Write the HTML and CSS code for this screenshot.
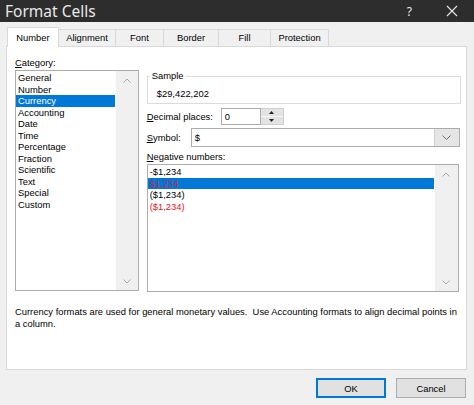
FILE: index.html
```html
<!DOCTYPE html>
<html lang="en">
<head>
    <meta charset="UTF-8">
    <title>Format Cells</title>
    <link rel="stylesheet" href="styles.css">
</head>
<body>
    <div class="titlebar">
        <span class="title">Format Cells</span>
        <span class="help">?</span>
        <svg class="close" width="12" height="12" viewBox="0 0 12 12">
            <path d="M1 1L11 11M11 1L1 11" stroke="#e8e8e8" stroke-width="1.1" fill="none"/>
        </svg>
    </div>

    <div class="tabs">
        <div class="tab active">Number</div>
        <div class="tab">Alignment</div>
        <div class="tab">Font</div>
        <div class="tab">Border</div>
        <div class="tab">Fill</div>
        <div class="tab">Protection</div>
    </div>

    <div class="panel">
        <div class="columns">
            <div class="category">
                <div class="label"><u>C</u>ategory:</div>
                <div class="listbox category-list">
                    <ul class="items">
                        <li>General</li>
                        <li>Number</li>
                        <li class="selected">Currency</li>
                        <li>Accounting</li>
                        <li>Date</li>
                        <li>Time</li>
                        <li>Percentage</li>
                        <li>Fraction</li>
                        <li>Scientific</li>
                        <li>Text</li>
                        <li>Special</li>
                        <li>Custom</li>
                    </ul>
                    <div class="scrollbar">
                        <svg width="8" height="5" viewBox="0 0 8 5"><path d="M0.5 4.5L4 1L7.5 4.5" stroke="#a8a8a8" fill="none"/></svg>
                        <svg width="8" height="5" viewBox="0 0 8 5"><path d="M0.5 0.5L4 4L7.5 0.5" stroke="#a8a8a8" fill="none"/></svg>
                    </div>
                </div>
            </div>

            <div class="options">
                <fieldset class="sample">
                    <legend>Sample</legend>
                    <div class="sample-value">$29,422,202</div>
                </fieldset>

                <div class="row decimals">
                    <span class="row-label"><u>D</u>ecimal places:</span>
                    <span class="textbox">0</span>
                    <span class="spinner">
                        <span class="spin-btn"><svg width="5" height="3" viewBox="0 0 5 3"><path d="M0 3L2.5 0L5 3Z" fill="#222"/></svg></span>
                        <span class="spin-btn"><svg width="5" height="3" viewBox="0 0 5 3"><path d="M0 0L2.5 3L5 0Z" fill="#222"/></svg></span>
                    </span>
                </div>

                <div class="row symbol">
                    <span class="row-label"><u>S</u>ymbol:</span>
                    <span class="combo">
                        <span class="combo-value">$</span>
                        <span class="combo-btn"><svg width="9" height="5" viewBox="0 0 9 5"><path d="M0.5 0.5L4.5 4.5L8.5 0.5" stroke="#707070" fill="none"/></svg></span>
                    </span>
                </div>

                <div class="label negative-label"><u>N</u>egative numbers:</div>
                <div class="listbox negative-list">
                    <ul class="items">
                        <li>-$1,234</li>
                        <li class="selected red">$1,234</li>
                        <li>($1,234)</li>
                        <li class="red">($1,234)</li>
                    </ul>
                    <div class="scrollbar">
                        <svg width="8" height="5" viewBox="0 0 8 5"><path d="M0.5 4.5L4 1L7.5 4.5" stroke="#a8a8a8" fill="none"/></svg>
                        <svg width="8" height="5" viewBox="0 0 8 5"><path d="M0.5 0.5L4 4L7.5 0.5" stroke="#a8a8a8" fill="none"/></svg>
                    </div>
                </div>
            </div>
        </div>

        <p class="description">Currency formats are used for general monetary values.&nbsp; Use Accounting formats to align decimal points in a column.</p>
    </div>

    <div class="footer">
        <button class="default">OK</button>
        <button>Cancel</button>
    </div>
</body>
</html>
```

FILE: styles.css
```css
body {
    margin: 0;
    width: 474px;
    height: 405px;
    background-color: #f0f0f0;
    font-family: "Liberation Sans", Arial, sans-serif;
    font-size: 9.4px;
    color: #000;
    overflow: hidden;
}
ul {
    list-style: none;
    margin: 0;
    padding: 0;
}
u {
    text-underline-offset: 1px;
}

/* title bar */
.titlebar {
    height: 22px;
    background-color: #2d2d2d;
    color: #e8e8e8;
    display: flex;
    align-items: center;
    padding-left: 5px;
}
.title {
    font-family: "Noto Sans", sans-serif;
    font-size: 15.5px;
    flex: 1;
}
.help {
    font-family: "Noto Sans", sans-serif;
    font-size: 12px;
    margin-right: 34px;
}
.close {
    margin-right: 16px;
}

/* tabs */
.tabs {
    display: flex;
    align-items: flex-end;
    height: 19px;
    margin-top: 5px;
    padding-left: 7px;
}
.tab {
    box-sizing: border-box;
    height: 17px;
    line-height: 15px;
    border: 1px solid #d9d9d9;
    border-bottom: none;
    margin-left: -1px;
    background-color: #f0f0f0;
    text-align: center;
}
.tab:nth-child(1) { width: 52px; }
.tab:nth-child(2) { width: 58px; }
.tab:nth-child(3) { width: 49px; }
.tab:nth-child(4) { width: 56px; }
.tab:nth-child(5) { width: 53px; }
.tab:nth-child(6) { width: 59px; }
.tab.active {
    position: relative;
    z-index: 1;
    height: 20px;
    line-height: 19px;
    margin-bottom: -1px;
    margin-left: 0;
    background-color: #fff;
}

/* content panel */
.panel {
    box-sizing: border-box;
    height: 324px;
    margin: 0 7px 0 6px;
    padding: 9px 5px 0 8px;
    background-color: #fff;
    border: 1px solid #d9d9d9;
}
.columns {
    display: flex;
    gap: 8px;
}
.label {
    line-height: 13px;
}
.category {
    width: 124px;
}

.listbox {
    box-sizing: border-box;
    display: flex;
    border: 1px solid #acacac;
    background-color: #fff;
}
.items {
    flex: 1;
    padding-top: 1px;
}
.items li {
    line-height: 11.5px;
    height: 11.5px;
    padding-left: 2px;
    white-space: nowrap;
}
.items li.selected {
    background-color: #0078d7;
    color: #fff;
    margin-right: 1px;
}
.items li.red {
    color: #e81123;
}
.items li.selected.red {
    color: #c8283c;
}
.scrollbar {
    width: 22px;
    background-color: #f0f0f0;
    display: flex;
    flex-direction: column;
    justify-content: space-between;
    align-items: center;
    padding: 7px 0 6px;
}
.category-list {
    margin-top: 1px;
    height: 221px;
}

.options {
    width: 315px;
}
.sample {
    margin: 14px 0 0;
    padding: 5px 9px 3px;
    border: 1px solid #dcdcdc;
    min-inline-size: 0;
}
.sample legend {
    padding: 0 2px;
    margin-left: -7px;
    line-height: 12px;
}
.sample-value {
    line-height: 13px;
}

.row {
    display: flex;
    align-items: center;
}
.decimals {
    margin-top: 4px;
    height: 17px;
}
.decimals .row-label {
    width: 74px;
}
.textbox {
    box-sizing: border-box;
    width: 40px;
    height: 17px;
    line-height: 16px;
    padding-left: 3px;
    border: 1px solid #acacac;
}
.spinner {
    box-sizing: border-box;
    width: 23px;
    height: 17px;
    display: flex;
    flex-direction: column;
    border: 1px solid #cfcfcf;
    border-left: none;
}
.spin-btn {
    flex: 1;
    display: flex;
    align-items: center;
    justify-content: center;
    background-color: #e3e3e3;
}
.spin-btn + .spin-btn {
    border-top: 1px solid #f7f7f7;
}

.symbol {
    margin-top: 3px;
    height: 19px;
}
.symbol .row-label {
    width: 44px;
}
.combo {
    box-sizing: border-box;
    width: 269px;
    height: 19px;
    display: flex;
    border: 1px solid #acacac;
}
.combo-value {
    flex: 1;
    line-height: 18px;
    padding-left: 3px;
}
.combo-btn {
    width: 24px;
    display: flex;
    align-items: center;
    justify-content: center;
    background-color: #e5e5e5;
    border-left: 1px solid #d0d0d0;
}

.negative-label {
    margin-top: 3px;
}
.negative-list {
    margin-top: 1px;
    width: 312px;
    height: 128px;
}
.negative-list .scrollbar {
    width: 23px;
}

.description {
    margin: 14px 0 0;
    line-height: 12px;
}

/* buttons */
.footer {
    display: flex;
    justify-content: flex-end;
    gap: 10px;
    padding: 8px 8px 0 0;
}
button {
    box-sizing: border-box;
    width: 70px;
    height: 20px;
    padding: 0;
    font-family: inherit;
    font-size: 9.4px;
    color: #000;
    background-color: #e1e1e1;
    border: 1px solid #adadad;
}
button.default {
    border: 1px solid #0078d7;
    box-shadow: inset 0 0 0 1px #0078d7;
}
```
